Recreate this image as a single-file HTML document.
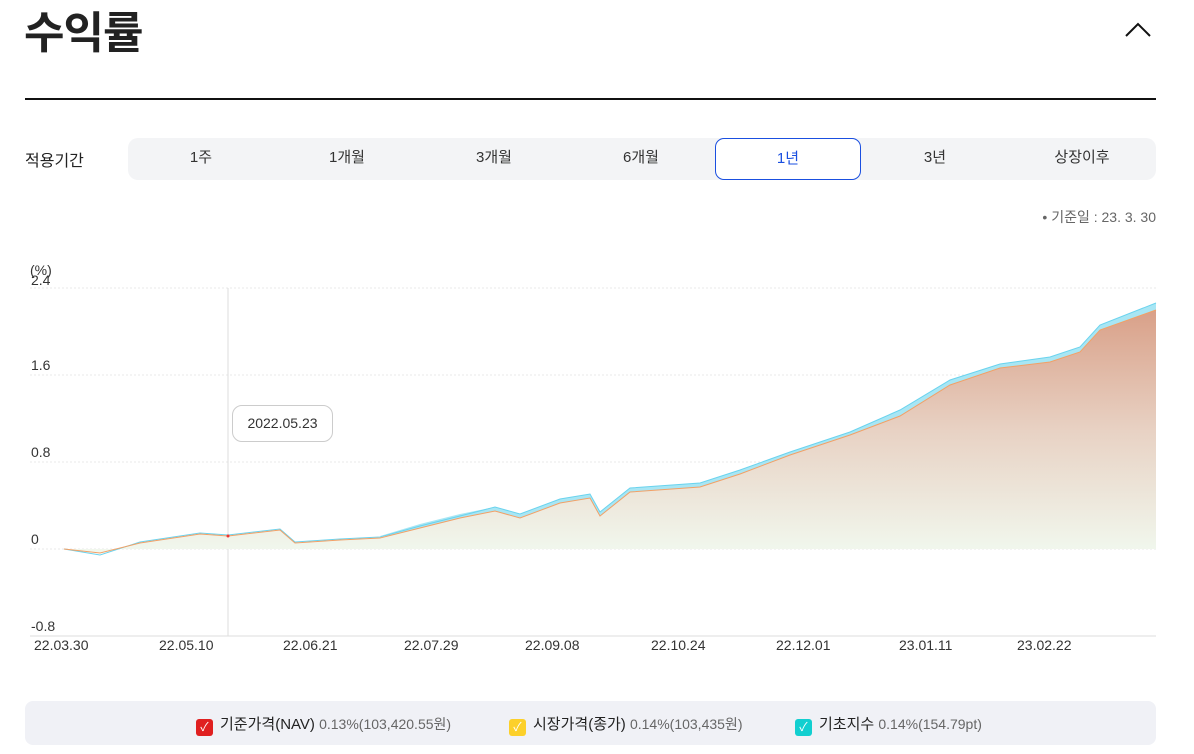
<!DOCTYPE html>
<html><head><meta charset="utf-8"><style>
body{margin:0;width:1194px;height:754px;background:#fff;font-family:"Liberation Sans","Noto Sans CJK KR",sans-serif;position:relative;overflow:hidden;color:#222}
.abs{position:absolute}
.tabs{left:128px;top:138px;width:1028px;height:42px;background:#f3f4f6;border-radius:10px}
.tab{position:absolute;top:0;height:42px;line-height:40px;font-size:15px;color:#333;text-align:center;width:146px}
.sel{border:1px solid #1a4fe0;border-radius:9px;background:#fff;color:#1a4fe0;box-sizing:border-box;height:42px}
.ax{font-size:14px;color:#333}
.leg{left:25px;top:701px;width:1131px;height:44px;background:#f0f1f6;border-radius:8px;font-size:15px}
.cb{display:inline-block;width:17px;height:17px;border-radius:3px;vertical-align:-2px;margin-right:7px;color:#fff;font-size:12px;text-align:center;line-height:17px}
.g{color:#666;font-size:14px}
</style></head><body>
<div class="abs" style="left:24px;top:-3px;font-size:44px;font-weight:bold;letter-spacing:-1px">수익률</div>
<svg class="abs" style="left:1124px;top:20px" width="28" height="20"><path d="M2 16 L14 4 L26 16" stroke="#111" stroke-width="2" fill="none"/></svg>
<div class="abs" style="left:25px;top:98px;width:1131px;height:2px;background:#111"></div>
<div class="abs" style="left:25px;top:147px;font-size:16px">적용기간</div>
<div class="abs tabs">
<div class="tab" style="left:0">1주</div>
<div class="tab" style="left:146px">1개월</div>
<div class="tab" style="left:293px">3개월</div>
<div class="tab" style="left:440px">6개월</div>
<div class="tab sel" style="left:587px">1년</div>
<div class="tab" style="left:734px">3년</div>
<div class="tab" style="left:881px">상장이후</div>
</div>
<div class="abs" style="right:38px;top:207px;font-size:14px;color:#666">• 기준일 : 23. 3. 30</div>
<div class="abs ax" style="left:30px;top:262px">(%)</div>
<div class="abs ax" style="left:31px;top:272px">2.4</div>
<div class="abs ax" style="left:31px;top:357px">1.6</div>
<div class="abs ax" style="left:31px;top:444px">0.8</div>
<div class="abs ax" style="left:31px;top:531px">0</div>
<div class="abs ax" style="left:31px;top:618px">-0.8</div>
<svg class="abs" style="left:0;top:0" width="1194" height="700">
<defs><linearGradient id="gr" x1="0" y1="0" x2="0" y2="1"><stop offset="0" stop-color="#d9a088"/><stop offset="0.5" stop-color="#e8d2c4"/><stop offset="1" stop-color="#f1f8ee"/></linearGradient></defs>
<g stroke="#e8e8e8" stroke-dasharray="2 2"><line x1="30" y1="288" x2="1156" y2="288"/><line x1="30" y1="375" x2="1156" y2="375"/><line x1="30" y1="462" x2="1156" y2="462"/><line x1="30" y1="549" x2="1156" y2="549"/></g>
<line x1="30" y1="636" x2="1156" y2="636" stroke="#ddd"/>
<line x1="228" y1="288" x2="228" y2="636" stroke="#ddd"/>
<path d="M1156 303 L1100 325 L1080 347 L1050 357 L1000 364 L950 380 L900 410 L850 432 L790 452 L740 470 L700 483 L630 488 L600 512 L590 494 L560 499 L520 514 L495 507 L460 514 L420 524 L380 536 L1156 536Z" fill="#a8e6f4"/>
<path d="M64 549 L100 553 L140 543 L200 534 L228 536 L280 530 L295 543 L340 540 L380 538 L420 528 L460 518 L495 511 L520 518 L560 503 L590 498 L600 516 L630 492 L700 487 L740 474 L790 455 L850 435 L900 416 L950 385 L1000 368 L1050 362 L1080 352 L1100 330 L1156 310 L1156 549 L64 549Z" fill="url(#gr)"/>
<polyline fill="none" stroke="#6ad3ee" stroke-width="1" points="64,549 100,555 140,542 200,533 228,535 280,529 295,542 340,539 380,537 420,526 460,516 495,507 520,514 560,499 590,494 600,512 630,488 700,483 740,470 790,452 850,432 900,410 950,380 1000,364 1050,357 1080,347 1100,325 1156,303"/>
<polyline fill="none" stroke="#f2a066" stroke-width="1" points="64,549 100,553 140,543 200,534 228,536 280,530 295,543 340,540 380,538 420,528 460,518 495,511 520,518 560,503 590,498 600,516 630,492 700,487 740,474 790,455 850,435 900,416 950,385 1000,368 1050,362 1080,352 1100,330 1156,310"/>
<circle cx="228" cy="536" r="1.5" fill="#e33"/>
</svg>
<div class="abs" style="left:232px;top:405px;width:99px;height:35px;border:1px solid #ccc;border-radius:10px;background:#fff;font-size:14px;line-height:35px;text-align:center;color:#333">2022.05.23</div>
<div class="abs ax" style="left:34px;top:637px">22.03.30</div>
<div class="abs ax" style="left:159px;top:637px">22.05.10</div>
<div class="abs ax" style="left:283px;top:637px">22.06.21</div>
<div class="abs ax" style="left:404px;top:637px">22.07.29</div>
<div class="abs ax" style="left:525px;top:637px">22.09.08</div>
<div class="abs ax" style="left:651px;top:637px">22.10.24</div>
<div class="abs ax" style="left:776px;top:637px">22.12.01</div>
<div class="abs ax" style="left:899px;top:637px">23.01.11</div>
<div class="abs ax" style="left:1017px;top:637px">23.02.22</div>
<div class="abs leg">
<div class="abs" style="left:171px;top:12px"><span class="cb" style="background:#e02020">✓</span>기준가격(NAV) <span class="g">0.13%(103,420.55원)</span></div>
<div class="abs" style="left:484px;top:12px"><span class="cb" style="background:#fcd02a">✓</span>시장가격(종가) <span class="g">0.14%(103,435원)</span></div>
<div class="abs" style="left:770px;top:12px"><span class="cb" style="background:#12cfd0">✓</span>기초지수 <span class="g">0.14%(154.79pt)</span></div>
</div>
</body></html>
